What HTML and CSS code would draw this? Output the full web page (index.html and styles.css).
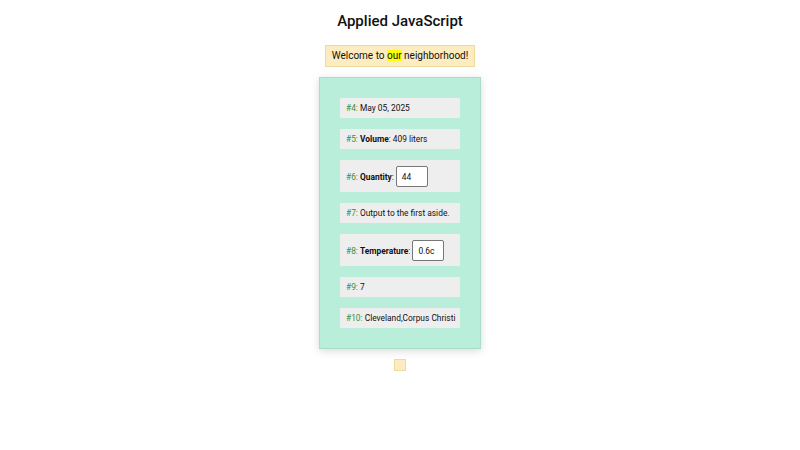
FILE: index.html
```html
<!DOCTYPE html>
<html>
<head>
<meta charset="utf-8">
<link rel="stylesheet" href="styles.css">
</head>
<body>
<main class="page">
  <h1 class="title">Applied JavaScript</h1>
  <p class="welcome">Welcome to <mark class="hl">our</mark> neighborhood!</p>
  <section class="panel">
    <div class="item"><span class="num">#4:</span>&nbsp;May 05, 2025</div>
    <div class="item"><span class="num">#5:</span>&nbsp;<b>Volume</b>: 409 liters</div>
    <div class="item item-input"><span class="num">#6:</span>&nbsp;<b>Quantity</b>:&nbsp;<input class="field" type="text" value="44"></div>
    <div class="item"><span class="num">#7:</span>&nbsp;Output to the first aside.</div>
    <div class="item item-input"><span class="num">#8:</span>&nbsp;<b>Temperature</b>:&nbsp;<input class="field" type="text" value="0.6c"></div>
    <div class="item"><span class="num">#9:</span>&nbsp;7</div>
    <div class="item"><span class="num">#10:</span>&nbsp;Cleveland,Corpus Christi</div>
  </section>
  <div class="aside"></div>
</main>
</body>
</html>
```
FILE: styles.css
```css
html, body {
  margin: 0;
  padding: 0;
  background: #ffffff;
}
body {
  font-family: Roboto, "Liberation Sans", sans-serif;
  color: #111;
}
.page {
  display: flex;
  flex-direction: column;
  align-items: center;
}
.title {
  font-size: 15px;
  font-weight: 500;
  margin: 11px 0 0 0;
  line-height: 20px;
}
.welcome {
  margin: 14px 0 0 0;
  background: #fcecbf;
  border: 1px solid #eddc9f;
  font-size: 10px;
  line-height: 20px;
  padding: 0 6px;
}
.hl {
  background: #ffff00;
  color: inherit;
}
.panel {
  margin-top: 10px;
  background: #b9eedb;
  border: 1px solid #a9dcc9;
  box-shadow: 0 2px 8px rgba(0,0,0,0.15);
  padding: 20px;
  width: 120px;
  display: flex;
  flex-direction: column;
  gap: 11px;
}
.item {
  background: #eeeeee;
  font-size: 8.4px;
  line-height: 12px;
  padding: 4px 6px;
  white-space: nowrap;
  overflow: hidden;
  display: flex;
  align-items: center;
}
.item-input {
  padding: 6px 6px 5px 6px;
}
.num {
  color: #3a8f3a;
}
.field {
  width: 20px;
  height: 19px;
  box-sizing: content-box;
  padding: 0 5px;
  border: 1px solid #777;
  border-radius: 2px;
  font-family: Roboto, "Liberation Sans", sans-serif;
  font-size: 8.4px;
  margin: 0;
  background: #fff;
  color: #111;
}
.aside {
  margin-top: 10px;
  width: 10px;
  height: 10px;
  background: #fcecbf;
  border: 1px solid #eddc9f;
}
```
